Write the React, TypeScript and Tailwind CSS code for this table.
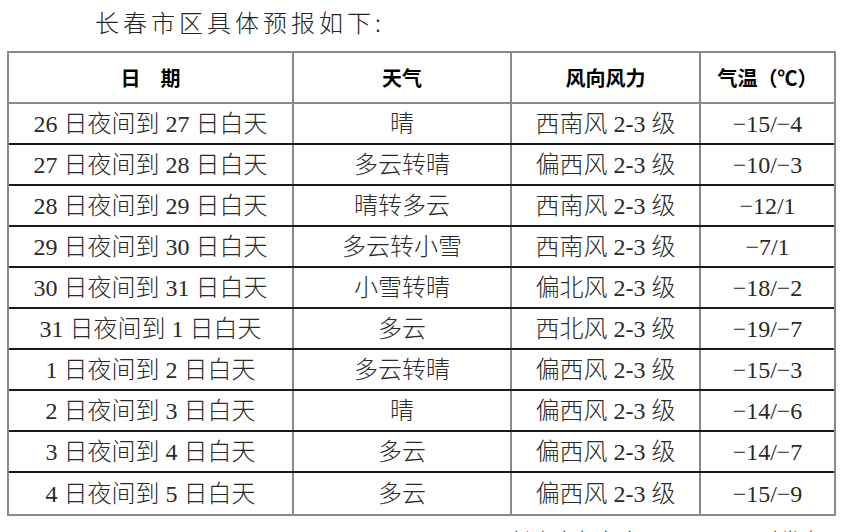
import React from "react";

const rows: [string, string, string, string][] = [
  ["26 日夜间到 27 日白天", "晴", "西南风 2-3 级", "−15/−4"],
  ["27 日夜间到 28 日白天", "多云转晴", "偏西风 2-3 级", "−10/−3"],
  ["28 日夜间到 29 日白天", "晴转多云", "西南风 2-3 级", "−12/1"],
  ["29 日夜间到 30 日白天", "多云转小雪", "西南风 2-3 级", "−7/1"],
  ["30 日夜间到 31 日白天", "小雪转晴", "偏北风 2-3 级", "−18/−2"],
  ["31 日夜间到 1 日白天", "多云", "西北风 2-3 级", "−19/−7"],
  ["1 日夜间到 2 日白天", "多云转晴", "偏西风 2-3 级", "−15/−3"],
  ["2 日夜间到 3 日白天", "晴", "偏西风 2-3 级", "−14/−6"],
  ["3 日夜间到 4 日白天", "多云", "偏西风 2-3 级", "−14/−7"],
  ["4 日夜间到 5 日白天", "多云", "偏西风 2-3 级", "−15/−9"],
];

const body = "font-['Liberation_Serif','Noto_Sans_CJK_SC',serif]";
const cjk = "font-['Noto_Sans_CJK_SC',sans-serif]";

export default function App() {
  return (
    <div className="w-[854px] h-[532px] overflow-hidden bg-white text-black">
      <div
        className={`h-[51px] pl-[95px] pt-[6px] text-[24px] leading-[32px] tracking-[4px] font-light text-[#222] ${cjk}`}
      >
        长春市区具体预报如下:
      </div>
      <div className="ml-[7px] w-[829px] border-2 border-[#8a8a8a]">
        <div className="flex h-[51px] border-b-2 border-[#8a8a8a] text-[20px] font-bold">
          <div className={`w-[285px] flex items-center justify-center border-r-2 border-[#8a8a8a] ${cjk}`}>
            日　期
          </div>
          <div className={`w-[218px] flex items-center justify-center border-r-2 border-[#8a8a8a] ${cjk}`}>
            天气
          </div>
          <div className={`w-[189px] flex items-center justify-center border-r-2 border-[#8a8a8a] ${cjk}`}>
            风向风力
          </div>
          <div className={`flex-1 flex items-center justify-center ${cjk}`}>
            气温（℃）
          </div>
        </div>
        {rows.map((r, i) => (
          <div
            key={i}
            className={`flex h-[41px] text-[24px] font-light text-[#2a2a2a] ${
              i < rows.length - 1 ? "border-b-2 border-[#1a1a1a]" : ""
            }`}
          >
            <div className={`w-[285px] flex items-center justify-center border-r-2 border-[#8a8a8a] ${body}`}>
              {r[0]}
            </div>
            <div className={`w-[218px] flex items-center justify-center border-r-2 border-[#8a8a8a] ${body}`}>
              {r[1]}
            </div>
            <div className={`w-[189px] flex items-center justify-center border-r-2 border-[#8a8a8a] ${body}`}>
              {r[2]}
            </div>
            <div className={`flex-1 flex items-center justify-center ${body}`}>
              {r[3]}
            </div>
          </div>
        ))}
      </div>
      <div className={`pl-[510px] pt-[11px] text-[22px] leading-[30px] font-light text-[#222] ${body}`}>
        长春市气象台 12月26日16时发布
      </div>
    </div>
  );
}
